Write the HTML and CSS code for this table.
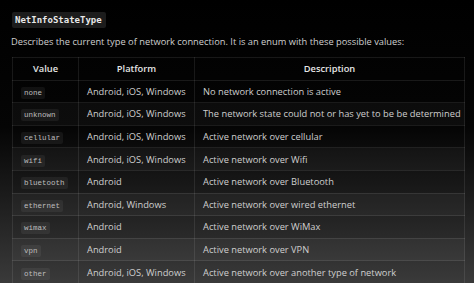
FILE: index.html
```html
<!DOCTYPE html>
<html lang="en">
<head>
  <meta charset="UTF-8">
  <title>NetInfoStateType</title>
  <link rel="stylesheet" href="styles.css">
</head>
<body>
  <div class="doc">
    <h3 class="type-name"><code>NetInfoStateType</code></h3>
    <p class="intro">Describes the current type of network connection. It is an enum with these possible values:</p>
    <table class="values">
      <thead>
        <tr><th class="col-value">Value</th><th class="col-platform">Platform</th><th>Description</th></tr>
      </thead>
      <tbody>
        <tr><td><code>none</code></td><td>Android, iOS, Windows</td><td>No network connection is active</td></tr>
        <tr><td><code>unknown</code></td><td>Android, iOS, Windows</td><td>The network state could not or has yet to be be determined</td></tr>
        <tr><td><code>cellular</code></td><td>Android, iOS, Windows</td><td>Active network over cellular</td></tr>
        <tr><td><code>wifi</code></td><td>Android, iOS, Windows</td><td>Active network over Wifi</td></tr>
        <tr><td><code>bluetooth</code></td><td>Android</td><td>Active network over Bluetooth</td></tr>
        <tr><td><code>ethernet</code></td><td>Android, Windows</td><td>Active network over wired ethernet</td></tr>
        <tr><td><code>wimax</code></td><td>Android</td><td>Active network over WiMax</td></tr>
        <tr><td><code>vpn</code></td><td>Android</td><td>Active network over VPN</td></tr>
        <tr><td><code>other</code></td><td>Android, iOS, Windows</td><td>Active network over another type of network</td></tr>
      </tbody>
    </table>
  </div>
</body>
</html>
```

FILE: styles.css
```css
html, body {
  height: 100%;
}
body {
  margin: 0;
  font-family: "Open Sans", "Noto Sans", sans-serif;
  color: #cfcfcf;
  background: linear-gradient(180deg, #000 0%, #050505 45%, #1e1e1e 72%, #3a3a3a 100%);
  overflow: hidden;
}
.doc {
  padding: 8px 10px 0 12px;
}
.type-name {
  margin: 0;
  line-height: 16px;
}
.type-name code {
  display: inline-block;
  background: #1c1c1c;
  color: #e8e8e8;
  font-family: "DejaVu Sans Mono", monospace;
  font-size: 9px;
  font-weight: bold;
  padding: 0 4px 0 3px;
  border-radius: 2px;
}
.intro {
  margin: 8px 0 0 -1px;
  font-size: 9.3px;
  line-height: 12px;
  color: #cfcfcf;
}
.values {
  margin-top: 9px;
  width: 453px;
  table-layout: fixed;
  border-collapse: collapse;
  font-size: 9.3px;
}
.values th, .values td {
  border: 1px solid rgba(255,255,255,0.09);
  height: 21.6px;
  padding: 0 0 0 8px;
  text-align: left;
  white-space: nowrap;
}
.values th {
  text-align: center;
  padding: 0;
  font-weight: 600;
  color: #e6e6e6;
}
.col-value {
  width: 65px;
}
.col-platform {
  width: 115px;
}
.values tbody tr:nth-child(even) {
  background: rgba(255,255,255,0.035);
}
.values td code {
  font-family: "Liberation Mono", monospace;
  font-size: 7.5px;
  color: #bdbdbd;
  background: rgba(255,255,255,0.06);
  padding: 2px 3px;
  border-radius: 2px;
}
```
